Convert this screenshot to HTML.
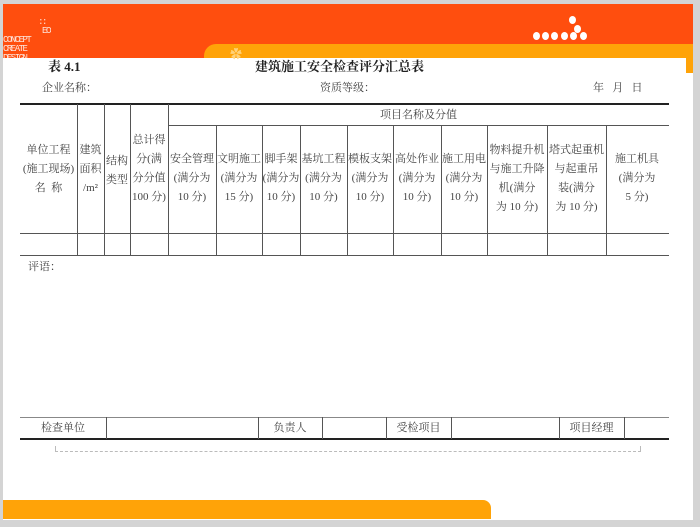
<!DOCTYPE html>
<html><head><meta charset="utf-8"><style>
*{margin:0;padding:0;box-sizing:border-box}
body{width:700px;height:527px;background:#d4d4d4;position:relative;overflow:hidden;font-family:"Liberation Serif","Noto Serif CJK SC",serif;color:#333}
.slide{position:absolute;left:3px;top:4px;width:690px;height:516px;background:#fff}
.a{position:absolute}
.t{position:absolute;font-size:11px;line-height:17px;text-align:center;color:#444;white-space:nowrap}
.h{position:absolute;background:#555;height:1px}
.v{position:absolute;background:#555;width:1px}
.dot{position:absolute;width:7px;height:8px;border-radius:50%;background:#fff}
</style></head><body>
<div class="slide"></div>
<div class="a" style="left:3px;top:4px;width:690px;height:54px;background:#ff4e0e"></div>
<div class="a" style="left:204px;top:44px;width:489px;height:14px;background:#ffa308;border-top-left-radius:12px"></div>
<div class="a" style="left:686px;top:58px;width:7px;height:15px;background:#ffa308"></div>
<div class="a" style="left:3px;top:58px;width:683px;height:4px;background:#fff"></div>
<div class="a" style="left:3px;top:18px;width:48px;height:40px;color:#fff;font:9px/9px 'Liberation Mono',monospace;letter-spacing:-1.5px;white-space:pre;opacity:.85;overflow:hidden">         :: ::
          ECC
CONCEPT
CREATE
DESIGN</div>
<div class="dot" style="left:533px;top:32px"></div><div class="dot" style="left:542px;top:32px"></div><div class="dot" style="left:551px;top:32px"></div><div class="dot" style="left:561px;top:32px"></div><div class="dot" style="left:570px;top:32px"></div><div class="dot" style="left:580px;top:32px"></div><div class="dot" style="left:569px;top:16px"></div><div class="dot" style="left:574px;top:25px"></div>
<div class="a" style="left:230px;top:45px;width:16px;height:12px;color:#ffd27a;font-size:12px">✿</div>
<div class="a" style="left:3px;top:500px;width:488px;height:19px;background:#ffa308;border-top-right-radius:8px"></div>

<div class="t" style="left:48px;top:58px;font-size:13px;font-weight:bold;color:#222">表 4.1</div>
<div class="t" style="left:255px;top:58px;font-size:13px;font-weight:bold;color:#222">建筑施工安全检查评分汇总表</div>
<div class="t" style="left:42px;top:80px">企业名称：</div>
<div class="t" style="left:320px;top:80px">资质等级：</div>
<div class="t" style="left:593px;top:80px">年 &nbsp;&nbsp;月 &nbsp;&nbsp;日</div>

<div class="h" style="left:20px;top:103px;width:649px;height:2px;background:#222"></div>
<div class="h" style="left:168px;top:125px;width:501px"></div>
<div class="h" style="left:20px;top:233px;width:649px"></div>
<div class="h" style="left:20px;top:255px;width:649px"></div>
<div class="v" style="left:77px;top:104px;height:152px"></div>
<div class="v" style="left:104px;top:104px;height:152px"></div>
<div class="v" style="left:130px;top:104px;height:152px"></div>
<div class="v" style="left:168px;top:104px;height:152px"></div>
<div class="v" style="left:216px;top:125px;height:131px"></div>
<div class="v" style="left:262px;top:125px;height:131px"></div>
<div class="v" style="left:300px;top:125px;height:131px"></div>
<div class="v" style="left:347px;top:125px;height:131px"></div>
<div class="v" style="left:393px;top:125px;height:131px"></div>
<div class="v" style="left:441px;top:125px;height:131px"></div>
<div class="v" style="left:487px;top:125px;height:131px"></div>
<div class="v" style="left:547px;top:125px;height:131px"></div>
<div class="v" style="left:606px;top:125px;height:131px"></div>

<div class="t" style="left:380px;top:107px">项目名称及分值</div>
<div class="t" style="left:20px;width:57px;top:141px;line-height:19px">单位工程<br>(施工现场)<br>名 &nbsp;称</div>
<div class="t" style="left:77px;width:27px;top:141px;line-height:19px">建筑<br>面积<br>/m²</div>
<div class="t" style="left:104px;width:26px;top:152px;line-height:19px">结构<br>类型</div>
<div class="t" style="left:130px;width:38px;top:131px;line-height:19px">总计得<br>分(满<br>分分值<br>100 分)</div>
<div class="t" style="left:168px;width:48px;top:150px;line-height:19px">安全管理<br>(满分为<br>10 分)</div>
<div class="t" style="left:216px;width:46px;top:150px;line-height:19px">文明施工<br>(满分为<br>15 分)</div>
<div class="t" style="left:262px;width:38px;top:150px;line-height:19px">脚手架<br>(满分为<br>10 分)</div>
<div class="t" style="left:300px;width:47px;top:150px;line-height:19px">基坑工程<br>(满分为<br>10 分)</div>
<div class="t" style="left:347px;width:46px;top:150px;line-height:19px">模板支架<br>(满分为<br>10 分)</div>
<div class="t" style="left:393px;width:48px;top:150px;line-height:19px">高处作业<br>(满分为<br>10 分)</div>
<div class="t" style="left:441px;width:46px;top:150px;line-height:19px">施工用电<br>(满分为<br>10 分)</div>
<div class="t" style="left:487px;width:60px;top:141px;line-height:19px">物料提升机<br>与施工升降<br>机(满分<br>为 10 分)</div>
<div class="t" style="left:547px;width:59px;top:141px;line-height:19px">塔式起重机<br>与起重吊<br>装(满分<br>为 10 分)</div>
<div class="t" style="left:606px;width:62px;top:150px;line-height:19px">施工机具<br>(满分为<br>5 分)</div>

<div class="t" style="left:28px;top:259px">评语：</div>

<div class="h" style="left:20px;top:417px;width:649px;background:#888"></div>
<div class="h" style="left:20px;top:438px;width:649px;height:2px;background:#222"></div>
<div class="v" style="left:106px;top:417px;height:22px"></div>
<div class="v" style="left:258px;top:417px;height:22px"></div>
<div class="v" style="left:322px;top:417px;height:22px"></div>
<div class="v" style="left:386px;top:417px;height:22px"></div>
<div class="v" style="left:451px;top:417px;height:22px"></div>
<div class="v" style="left:559px;top:417px;height:22px"></div>
<div class="v" style="left:624px;top:417px;height:22px"></div>
<div class="t" style="left:20px;width:86px;top:420px">检查单位</div>
<div class="t" style="left:258px;width:64px;top:420px">负责人</div>
<div class="t" style="left:386px;width:65px;top:420px">受检项目</div>
<div class="t" style="left:559px;width:65px;top:420px">项目经理</div>
<div class="a" style="left:55px;top:446px;width:586px;height:6px;border:1px dashed #bbb;border-top:none"></div>
</body></html>
